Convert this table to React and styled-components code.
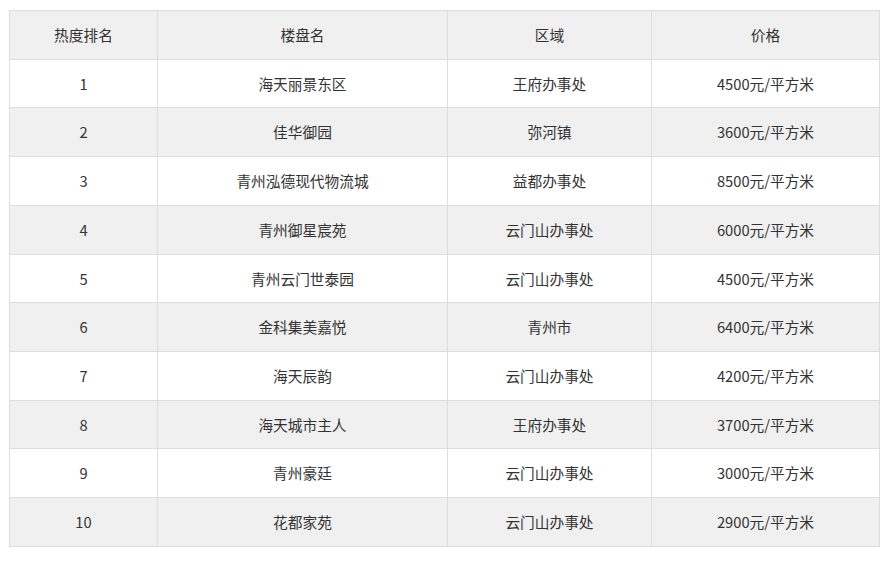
import React from 'react';
import styled, { createGlobalStyle } from 'styled-components';

const GlobalStyle = createGlobalStyle`
  body {
    margin: 0;
    background: #fff;
    font-family: "Noto Sans CJK SC", "Noto Sans", sans-serif;
    color: #333;
  }
`;

const Page = styled.div`
  padding: 10px 8px 0 9px;
`;

const Table = styled.table`
  width: 870px;
  border-collapse: collapse;
  table-layout: fixed;
  font-size: 14.7px;
`;

const Row = styled.tr`
  background: ${(p) => (p.$shaded ? '#f0f0f0' : '#fff')};
`;

const HeadCell = styled.th`
  border: 1px solid #ddd;
  padding: 14px 8px;
  line-height: 19.7px;
  font-weight: normal;
  text-align: center;
`;

const Cell = styled.td`
  border: 1px solid #ddd;
  padding: 14px 8px;
  line-height: 19.7px;
  text-align: center;
`;

const houses = [
  ['1', '海天丽景东区', '王府办事处', '4500元/平方米'],
  ['2', '佳华御园', '弥河镇', '3600元/平方米'],
  ['3', '青州泓德现代物流城', '益都办事处', '8500元/平方米'],
  ['4', '青州御星宸苑', '云门山办事处', '6000元/平方米'],
  ['5', '青州云门世泰园', '云门山办事处', '4500元/平方米'],
  ['6', '金科集美嘉悦', '青州市', '6400元/平方米'],
  ['7', '海天辰韵', '云门山办事处', '4200元/平方米'],
  ['8', '海天城市主人', '王府办事处', '3700元/平方米'],
  ['9', '青州豪廷', '云门山办事处', '3000元/平方米'],
  ['10', '花都家苑', '云门山办事处', '2900元/平方米'],
];

const App = () => {
  return (
    <Page>
      <GlobalStyle />
      <Table>
        <colgroup>
          <col style={{ width: 148 }} />
          <col style={{ width: 290 }} />
          <col style={{ width: 204 }} />
          <col style={{ width: 228 }} />
        </colgroup>
        <thead>
          <Row $shaded>
            <HeadCell>热度排名</HeadCell>
            <HeadCell>楼盘名</HeadCell>
            <HeadCell>区域</HeadCell>
            <HeadCell>价格</HeadCell>
          </Row>
        </thead>
        <tbody>
          {houses.map((h, i) => (
            <Row key={h[0]} $shaded={i % 2 === 1}>
              {h.map((v, j) => (
                <Cell key={j}>{v}</Cell>
              ))}
            </Row>
          ))}
        </tbody>
      </Table>
    </Page>
  );
};

export default App;
